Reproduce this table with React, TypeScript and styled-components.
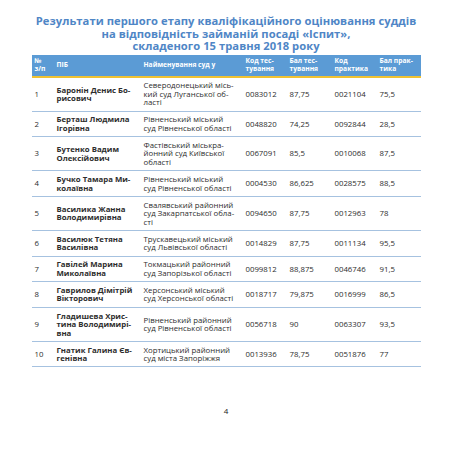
import React from "react";
import styled, { createGlobalStyle } from "styled-components";

const Global = createGlobalStyle`
  html, body { margin: 0; padding: 0; background: #ffffff; }
  body { font-family: "Open Sans", "Liberation Sans", sans-serif; }
`;

const Page = styled.div`
  width: 452px;
  height: 452px;
  box-sizing: border-box;
  padding-top: 15px;
  display: flex;
  flex-direction: column;
  align-items: center;
  background: #fff;
`;

const Title = styled.h1`
  margin: 0;
  font-size: 11.2px;
  line-height: 12.5px;
  font-weight: 700;
  color: #4f86c6;
  text-align: center;
  white-space: nowrap;
  letter-spacing: 0.05px;
`;

const Table = styled.table`
  margin-top: 2px;
  width: 389px;
  border-collapse: collapse;
  table-layout: fixed;
`;

const HeadRow = styled.tr`
  background: #5b9bd5;
  border-bottom: 2px solid #f0c232;
`;

const Th = styled.th<{ $w: number }>`
  width: ${(p) => p.$w}px;
  height: 22px;
  padding: 0 0 0 3px;
  box-sizing: border-box;
  text-align: left;
  vertical-align: middle;
  color: #ffffff;
  font-size: 6.7px;
  line-height: 8px;
  font-weight: 700;
  white-space: nowrap;
`;

const Row = styled.tr`
  border-bottom: 1.5px solid #a6c2e0;
`;

const Td = styled.td<{ $bold?: boolean }>`
  padding: 3.8px 0 3.8px 3px;
  vertical-align: middle;
  color: #2d2d2d;
  font-size: 7.8px;
  line-height: 8.5px;
  font-weight: ${(p) => (p.$bold ? 700 : 400)};
  white-space: nowrap;
  overflow: hidden;
`;

const PageNum = styled.div`
  margin-top: 38px;
  font-size: 8px;
  color: #222;
`;

type R = {
  n: string;
  name: string[];
  court: string[];
  kt: string;
  bt: string;
  kp: string;
  bp: string;
};

const rows: R[] = [
  { n: "1", name: ["Баронін Денис Бо-", "рисович"], court: ["Северодонецький місь-", "кий суд Луганської об-", "ласті"], kt: "0083012", bt: "87,75", kp: "0021104", bp: "75,5" },
  { n: "2", name: ["Берташ Людмила", "Ігорівна"], court: ["Рівненський міський", "суд Рівненської області"], kt: "0048820", bt: "74,25", kp: "0092844", bp: "28,5" },
  { n: "3", name: ["Бутенко Вадим", "Олексійович"], court: ["Фастівський міськра-", "йонний суд Київської", "області"], kt: "0067091", bt: "85,5", kp: "0010068", bp: "87,5" },
  { n: "4", name: ["Бучко Тамара Ми-", "колаївна"], court: ["Рівненський міський", "суд Рівненської області"], kt: "0004530", bt: "86,625", kp: "0028575", bp: "88,5" },
  { n: "5", name: ["Василика Жанна", "Володимирівна"], court: ["Свалявський районний", "суд Закарпатської обла-", "сті"], kt: "0094650", bt: "87,75", kp: "0012963", bp: "78" },
  { n: "6", name: ["Василюк Тетяна", "Василівна"], court: ["Трускавецький міський", "суд Львівської області"], kt: "0014829", bt: "87,75", kp: "0011134", bp: "95,5" },
  { n: "7", name: ["Гавілей Марина", "Миколаївна"], court: ["Токмацький районний", "суд Запорізької області"], kt: "0099812", bt: "88,875", kp: "0046746", bp: "91,5" },
  { n: "8", name: ["Гаврилов Дімітрій", "Вікторович"], court: ["Херсонський міський", "суд Херсонської області"], kt: "0018717", bt: "79,875", kp: "0016999", bp: "86,5" },
  { n: "9", name: ["Гладишева Хрис-", "тина Володимирі-", "вна"], court: ["Рівненський районний", "суд Рівненської області"], kt: "0056718", bt: "90", kp: "0063307", bp: "93,5" },
  { n: "10", name: ["Гнатик Галина Єв-", "генівна"], court: ["Хортицький районний", "суд міста Запоріжжя"], kt: "0013936", bt: "78,75", kp: "0051876", bp: "77" },
];

const Lines = ({ items }: { items: string[] }) => (
  <>
    {items.map((t, i) => (
      <React.Fragment key={i}>
        {i > 0 && <br />}
        {t}
      </React.Fragment>
    ))}
  </>
);

export default function App() {
  return (
    <>
      <Global />
      <Page>
        <Title>
          Результати першого етапу кваліфікаційного оцінювання суддів
          <br />
          на відповідність займаній посаді «Іспит»,
          <br />
          складеного 15 травня 2018 року
        </Title>
        <Table>
          <thead>
            <HeadRow>
              <Th $w={22}>№<br />з/п</Th>
              <Th $w={87}>ПІБ</Th>
              <Th $w={102}>Найменування суд у</Th>
              <Th $w={44}>Код тес-<br />тування</Th>
              <Th $w={45}>Бал тес-<br />тування</Th>
              <Th $w={45}>Код<br />практика</Th>
              <Th $w={44}>Бал прак-<br />тика</Th>
            </HeadRow>
          </thead>
          <tbody>
            {rows.map((r) => (
              <Row key={r.n}>
                <Td>{r.n}</Td>
                <Td $bold><Lines items={r.name} /></Td>
                <Td><Lines items={r.court} /></Td>
                <Td>{r.kt}</Td>
                <Td>{r.bt}</Td>
                <Td>{r.kp}</Td>
                <Td>{r.bp}</Td>
              </Row>
            ))}
          </tbody>
        </Table>
        <PageNum>4</PageNum>
      </Page>
    </>
  );
}
